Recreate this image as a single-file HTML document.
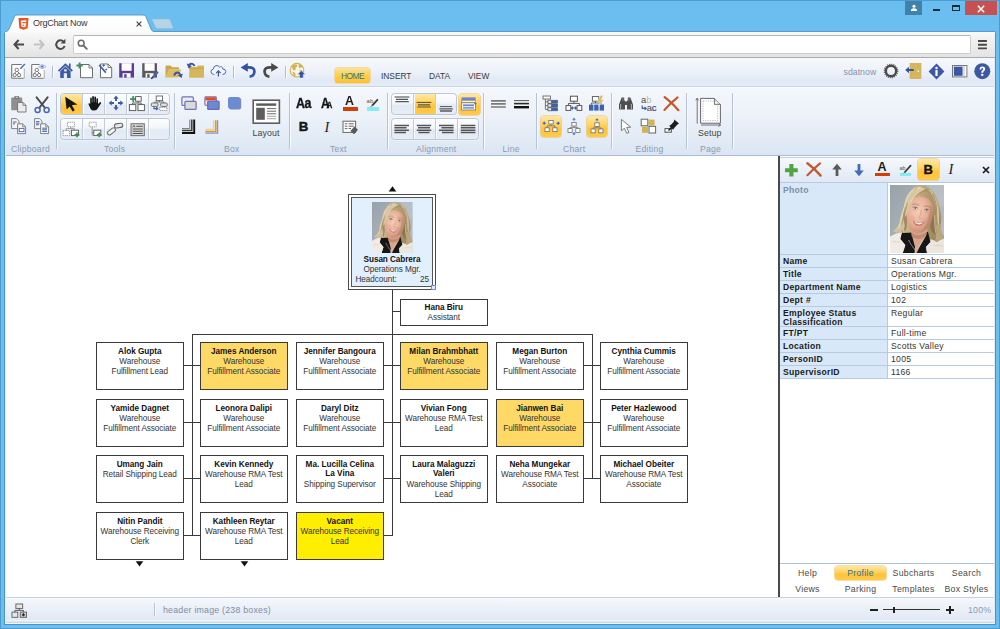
<!DOCTYPE html>
<html><head><meta charset="utf-8"><title>OrgChart Now</title>
<style>
*{box-sizing:border-box;margin:0;padding:0}
html,body{width:1000px;height:629px;overflow:hidden}
body{position:relative;background:#6bbff0;font-family:"Liberation Sans",sans-serif;font-size:10px;color:#222}
.abs{position:absolute}
svg{position:absolute;overflow:visible}
/* window frame */
#frame{position:absolute;left:0;top:0;width:1000px;height:629px;box-shadow:inset 0 0 0 1px #4c9bd1}
#frame2{position:absolute;left:4px;top:33px;width:992px;height:592px;border:1px solid #4a92c8;border-top:none}
#frame3{position:absolute;left:5px;top:58px;width:990px;height:566px;border-left:1px solid #eceef1;border-right:1px solid #e6e9ed;z-index:5;pointer-events:none}
#nav{position:absolute;left:5px;top:32px;width:990px;height:26px;background:linear-gradient(#f9f9f9,#f1f1f1 30%,#eaeaea 70%,#e3e3e3);border-bottom:1px solid #adaba9}
#url{position:absolute;left:73px;top:35px;width:898px;height:19px;background:#fff;border:1px solid #cdcdcd;border-top-color:#b4b4b4;border-radius:2px}
#app{position:absolute;left:5px;top:58px;width:990px;height:566px;background:#fff;overflow:hidden}
#qbar{position:absolute;left:0;top:0;width:990px;height:29px;background:linear-gradient(#f6f8fc,#eef2f9 45%,#e1e9f5 80%,#e6edf7);border-bottom:1px solid #c9d5e6}
#ribbon{position:absolute;left:0;top:29px;width:990px;height:69px;background:linear-gradient(#f4f7fc,#edf2f9 40%,#dbe6f3);border-bottom:1px solid #a9bcd6;border-top:1px solid #fbfcfe}
#status{position:absolute;left:0;top:539px;width:990px;height:27px;background:linear-gradient(#f5f8fc,#e9eff8 50%,#dce6f3);border-top:1px solid #c5d3e6}
.rlabel{position:absolute;top:87px;font-size:9.5px;color:#8b9bb4;letter-spacing:.35px;white-space:nowrap}
.rsep{position:absolute;top:7px;width:1px;height:56px;background:#b9c7db;box-shadow:1px 0 0 #f8fafd}
.tab{position:absolute;top:13px;font-size:9px;color:#333;letter-spacing:.3px;white-space:nowrap}
/* chart */
.box{position:absolute;width:87.5px;height:48px;border:1px solid #3a3a3a;background:#fff;text-align:center;font-size:8.2px;letter-spacing:-.08px;line-height:9.4px;color:#333;padding-top:3.6px;white-space:nowrap}
.box b{display:block;color:#111;font-size:8.2px;letter-spacing:-.02px;margin-bottom:1.4px}
.hl{background:#ffd966}
.vac{background:#ffee00}
.ln{position:absolute;background:#3a3a3a}
.tabt{top:71.2px;font-size:8.4px;letter-spacing:-.02px;color:#3a3a3a;white-space:nowrap;line-height:10px}
.rl{position:absolute;top:144px;font-size:8.6px;line-height:10px;color:#8a9ab3;letter-spacing:.25px;white-space:nowrap}
.sep{position:absolute;top:93px;width:1px;height:56px;background:#b4c3d9;box-shadow:1px 0 0 #f9fbfe}
.bg{position:absolute;height:22px;border:1px solid #bcc6d4;border-radius:3.5px;background:linear-gradient(#fdfeff,#f2f6fb 45%,#e2eaf5 55%,#e6edf7);box-shadow:0 0 0 .5px rgba(255,255,255,.6)}
.bg i{position:absolute;top:0;width:1px;height:20px;background:#c3ccd9;box-shadow:1px 0 0 #fafcff}
.sel{position:absolute;background:linear-gradient(#ffe7a6,#ffd566 40%,#ffc43a 60%,#ffc94a);}
.selb{position:absolute;border-radius:3px;background:linear-gradient(#ffe7a6,#ffd566 40%,#ffc43a 60%,#ffc94a);box-shadow:0 0 0 .6px #f0bd4e}
.big{position:absolute;font-size:8.8px;color:#444;white-space:nowrap;line-height:10px;letter-spacing:.1px}
.ct{position:absolute;text-align:center;letter-spacing:-.08px;font-size:8.2px;line-height:10px;color:#333;white-space:nowrap}
.ct.b{font-weight:bold;color:#111;font-size:8.2px}
/* panel */
#panel{position:absolute;left:778px;top:156px;width:217px;height:441px;background:#fff;border-left:2px solid #4a4a4a}
#ptool{position:absolute;left:780px;top:157px;width:215px;height:26px;border-top:1px solid #c3cfe2;background:linear-gradient(#f5f8fc,#eaf0f8 50%,#dfe8f4);border-bottom:1px solid #b9cadf}
.prow{position:absolute;left:780px;width:215px;border-bottom:1px solid #b5cbe3;background:#fff}
.prow .k{position:absolute;left:0;top:0;bottom:0;width:108px;background:#d8e8f8;border-right:1px solid #b5cbe3;font-weight:bold;font-size:8.6px;line-height:9.5px;color:#1a1a1a;padding:1.9px 0 0 3px;letter-spacing:.28px;white-space:nowrap}
.prow .v{position:absolute;left:111px;top:1.9px;font-size:8.6px;line-height:9.5px;color:#333;letter-spacing:.3px;white-space:nowrap}
.pt{margin-top:.6px;position:absolute;font-size:8.7px;line-height:10px;color:#4a4a4a;letter-spacing:.3px;white-space:nowrap;text-align:center}

</style></head>
<body>
<svg style="left:0;top:0" width="0" height="0">
 <defs>
  <linearGradient id="pbg" x1="0" y1="0" x2="1" y2=".8"><stop offset="0" stop-color="#97a1a9"/><stop offset=".5" stop-color="#a9b1b8"/><stop offset="1" stop-color="#bac1c6"/></linearGradient>
  <linearGradient id="phair" x1="0" y1="0" x2="1" y2=".25"><stop offset="0" stop-color="#c2ac82"/><stop offset=".3" stop-color="#d8c7a0"/><stop offset=".6" stop-color="#b9a074"/><stop offset="1" stop-color="#9f875e"/></linearGradient>
  <radialGradient id="pskin" cx=".4" cy=".4" r=".65"><stop offset="0" stop-color="#f5cdb6"/><stop offset=".55" stop-color="#e8b39a"/><stop offset="1" stop-color="#c48a72"/></radialGradient>
  <filter id="pb1" x="-30%" y="-30%" width="160%" height="160%"><feGaussianBlur stdDeviation="1.4"/></filter>
  <filter id="pb2" x="-30%" y="-30%" width="160%" height="160%"><feGaussianBlur stdDeviation=".7"/></filter>
  <filter id="pb3" x="-30%" y="-30%" width="160%" height="160%"><feGaussianBlur stdDeviation=".35"/></filter>
  <filter id="pb0" x="0" y="0" width="100%" height="100%"><feGaussianBlur stdDeviation=".28"/></filter>
  <clipPath id="pclip"><rect width="54" height="68"/></clipPath>
  <symbol id="ph" viewBox="0 0 54 68" preserveAspectRatio="none">
   <g clip-path="url(#pclip)"><rect width="54" height="68" fill="#a5aeb5"/><g filter="url(#pb0)">
    <rect x="-2" y="-2" width="58" height="72" fill="url(#pbg)"/>
    <ellipse cx="46" cy="10" rx="12" ry="14" fill="#c3c9cd" opacity=".55" filter="url(#pb1)"/>
    <!-- hair mass -->
    <path d="M31 .6 C25 .4 21.6 3.6 19.4 8 C16.4 11.6 15.4 15 14.6 19.6 C13 24 11.4 28 10.4 32.6 C9.8 36.4 9.4 39.4 7.6 42.2 C6.4 44 4.6 45.4 2.6 46.2 C5 47.6 8.4 48 10.8 47.2 C11.2 48.6 11.8 49.4 13 50 L40 54 C42 54.6 43 56 46.6 57.6 C50 56.6 53 54 54.4 51.6 C52 49.6 50.4 46 50 42 C51.4 38 51.6 34 51 30 C50.4 25.6 49.6 21.6 48.2 17.4 C46.6 12.6 45.4 9 42.4 6 C39.6 3 35.6 .8 31 .6Z" fill="url(#phair)" filter="url(#pb2)"/>
    <!-- hair shadows near face/neck -->
    <path d="M14.6 27 C13.4 33 12.8 40 14.8 47 C17 44 17.4 38 17 32 C16.8 29 16.2 26 14.6 27Z" fill="#8e7752" opacity=".7" filter="url(#pb2)"/>
    <path d="M42.6 24 C44.4 31 43.6 40 46 50 C42.8 48.6 40.4 45 40 41 C42 36 42.6 30 42.6 24Z" fill="#866d48" opacity=".75" filter="url(#pb2)"/>
    <path d="M48 20 C50 28 50.6 36 49.6 43" stroke="#a48c62" stroke-width="1.3" fill="none" opacity=".7" filter="url(#pb2)"/>
    <!-- black top + skin V -->
    <path d="M11.7 48 L38 47 L40.4 57 L35.8 62 L37 68.5 H12.6 L15.2 60.4 L10 54 Z" fill="#121317"/>
    <path d="M20.4 44 L37.6 44 L36 51 L29.6 62 L26.4 68.5 L24.6 68.5 L25 62 L22.6 53 Z" fill="#d8a58b" filter="url(#pb3)"/>
    <path d="M20.6 46.6 Q27.6 53.6 37 46.6 L36.4 50.4 Q28 57 21.4 51.6Z" fill="#b07c62" opacity=".6" filter="url(#pb2)"/>
    <!-- necklace -->
    <path d="M18.6 55 Q21.6 61 25 64.6 M32.4 55.2 Q29.6 61 26 64.6 M25.4 64 V68" stroke="#d2d6da" stroke-width="1" fill="none" stroke-dasharray=".9 .45"/>
    <circle cx="25.4" cy="64.6" r=".9" fill="#b0b6bc"/>
    <!-- jacket -->
    <path d="M-1 52.6 C3 49.6 8 47.6 11.8 47.8 L10.4 54 L15.4 60 L12.6 68.5 H-1Z" fill="#f0ebe4" filter="url(#pb3)"/>
    <path d="M55 54.6 C52 53.4 50 54.6 47 57 C44.6 56 42.6 54.6 40.6 54.6 L40.6 57 L36 62 L37.2 68.5 H55Z" fill="#ece6dd" filter="url(#pb3)"/>
    <path d="M2 57 Q6 55.6 9.6 57.6 M44 61 Q48.6 59.4 53 61.6" stroke="#d3cabd" stroke-width=".7" fill="none" filter="url(#pb3)"/>
    <!-- face -->
    <g transform="rotate(9 29.6 30)">
     <path d="M29.6 11.4 C37.6 11.4 42.6 17.6 42.6 27 C42.6 34 40.8 39.6 37.4 43.6 C34.8 46.8 32 48.6 29.4 48.6 C26.6 48.6 23.8 46.8 21.4 43.4 C18.4 39.4 16.8 34 16.8 27 C16.8 17.6 21.8 11.4 29.6 11.4Z" fill="url(#pskin)" filter="url(#pb3)"/>
     <path d="M39.6 18 Q44 28 40.6 39 Q37.6 45.6 32.6 48.2 Q37.6 42 38.4 33.6 Q39 25 39.6 18Z" fill="#b27a62" opacity=".5" filter="url(#pb2)"/>
     <ellipse cx="22.6" cy="34.6" rx="3.8" ry="3.2" fill="#e69a88" opacity=".3" filter="url(#pb2)"/>
     <ellipse cx="36.4" cy="35.4" rx="3.2" ry="3" fill="#d8907c" opacity=".3" filter="url(#pb2)"/>
     <!-- brows / eyes -->
     <path d="M20.6 20.8 Q24 18.8 27.6 20.6" stroke="#a38262" stroke-width=".9" fill="none" filter="url(#pb3)"/>
     <path d="M32.6 20.6 Q36.2 18.8 39.6 21" stroke="#a38262" stroke-width=".9" fill="none" filter="url(#pb3)"/>
     <ellipse cx="24.2" cy="23.8" rx="2.3" ry=".95" fill="#e9d6cc"/><circle cx="24.3" cy="23.8" r=".95" fill="#4f7474"/>
     <ellipse cx="36" cy="24" rx="2.2" ry=".95" fill="#e4d0c6"/><circle cx="35.9" cy="24" r=".95" fill="#4f7474"/>
     <path d="M21.4 23.4 Q24.2 21.9 27 23.6 M33.4 23.8 Q36 22.1 38.6 23.6" stroke="#6a5142" stroke-width=".6" fill="none"/>
     <path d="M22 25.4 Q24.4 26.4 26.6 25.4 M34 25.8 Q36 26.6 38.2 25.6" stroke="#c08d78" stroke-width=".5" fill="none" filter="url(#pb3)"/>
     <!-- nose -->
     <path d="M30.6 24.6 Q31.4 30 29.2 32.8 Q30.4 34 32.6 33" stroke="#c68c74" stroke-width=".9" fill="none" opacity=".6" filter="url(#pb2)"/>
     <!-- mouth -->
     <path d="M23.6 36.8 Q29.6 39 35.4 36.2 Q33.8 41 29.2 41 Q25.4 40.8 23.6 36.8Z" fill="#c4756c"/>
     <path d="M24.8 37.3 Q29.6 38.9 34.2 36.9 Q32.8 39.5 29.3 39.5 Q26.4 39.3 24.8 37.3Z" fill="#f8efe9"/>
     <path d="M26.4 44.8 Q29.4 46 32.6 44.6" stroke="#cf987f" stroke-width=".8" fill="none" filter="url(#pb3)"/>
    </g>
    <!-- front hair -->
    <path d="M19 12 C16.6 18 16 24 13 30 M44 10 C47 16 47.6 24 47 32 M10.6 36 C10 40 8 43 5.6 45.4 M50.6 44 C50.6 48 51.6 50 53 52" stroke="#a08a62" stroke-width=".9" fill="none" opacity=".7" filter="url(#pb2)"/>
    <path d="M36 3.4 C29 5.6 23.6 10.6 21 17.6 C19.8 21.6 18.4 26.6 15.4 32 C13.4 26 13.8 18 16.4 12 C19.6 5 27 1.4 36 3.4Z" fill="#d6c7a2" filter="url(#pb3)"/>
    <path d="M35.6 3.2 C41 6.6 44.6 12 45.6 19 C46.4 26 45.6 33 46.6 40 C49.6 34 50 25 48.2 17.4 C46 9 41.6 3.6 35.6 3.2Z" fill="#c3ae84" filter="url(#pb3)"/>
    <path d="M34 4.6 C28 7 23 11.6 20.6 17.6 M32 2.6 C25 4 19 9 16.8 17 M38 4.8 C42 8.6 45 14 46 20 M47.4 22 C48.4 30 48.2 37 49 43 M12.6 30 C11.8 35 11 40 8 44" stroke="#f1e8cf" stroke-width=".75" fill="none" opacity=".85" filter="url(#pb3)"/>
    <g fill="none" filter="url(#pb3)">
     <path d="M30 2 C23 4 18 9 16 16 C14.6 22 13 27 11.4 33 C10.6 38 9 42 5 45.6" stroke="#e9dcbc" stroke-width="1.1" opacity=".8"/>
     <path d="M27 3.4 C21.6 6.6 18.6 11.6 17.4 17.6 C16.4 23 15 28 13.4 33.6 C12.6 38.6 11.6 42.6 8.6 46.6" stroke="#a38b60" stroke-width=".9" opacity=".75"/>
     <path d="M24 5 C20 9 18.6 13 17.8 18" stroke="#f0e6cc" stroke-width=".8" opacity=".8"/>
     <path d="M15.4 22 C14.4 27 13.4 31 12.2 36 C11.6 40 10.8 44 12.6 48" stroke="#8f784f" stroke-width="1" opacity=".6"/>
     <path d="M40 5 C43.6 9 45.6 14 46.6 20 C47.4 27 47.6 33 48 39 C48.4 44 49.6 48 52.6 51" stroke="#e4d6b4" stroke-width="1" opacity=".75"/>
     <path d="M42.6 8.6 C45 13 46 18 46.6 24 C47 30 46.6 36 47.4 42 C47.8 47 48.6 51 47 56" stroke="#927a52" stroke-width="1" opacity=".7"/>
     <path d="M49.4 24 C50.4 30 50.6 36 50 42 C50 46 51 49 53.4 51" stroke="#b59d72" stroke-width=".9" opacity=".8"/>
     <path d="M44.6 30 C45 36 44.6 42 46 48 C46.6 51 46.6 54 45.6 56.6" stroke="#decfac" stroke-width=".9" opacity=".7"/>
    </g>
    <path d="M37 3.4 C32 5 27 8.4 23.6 13 C27.6 9.6 32 7.4 36.6 6.6 C40 8.6 42.6 12 44 16 C43.4 10.6 41 5.8 37 3.4Z" fill="#9f8862" opacity=".55" filter="url(#pb2)"/>
    <path d="M13.6 34 C12.8 39 10 43.6 4.6 46.4 C9.6 47.8 13.4 45.6 14.8 41.6Z" fill="#cfc09a" filter="url(#pb3)"/>
    <path d="M45.6 40 C46 46 48.6 50 45.4 56.6 C49.6 56 52.8 53.6 54 51.4 C51.6 48.6 50.4 44 50.4 39Z" fill="#bba67c" filter="url(#pb3)"/>
   </g></g>
  </symbol>
 </defs>
</svg>
<div id="frame"></div><div id="frame2"></div><div id="frame3"></div>
<svg style="left:0;top:0" width="1000" height="60" viewBox="0 0 1000 60">
 <defs><linearGradient id="tabg" x1="0" y1="0" x2="0" y2="1"><stop offset="0" stop-color="#ffffff"/><stop offset="1" stop-color="#fbfbfb"/></linearGradient></defs>
 <path d="M5 33 L5 32.5 Q8 31 9 29 L14.5 16.5 Q15.2 15 17 15 L143 15 Q145 15 145.8 16.5 L151.5 30 Q152.3 31.5 154 31.5 L995 31.5 L995 33 Z" fill="url(#tabg)" stroke="#4f94c4" stroke-width="0.9"/>
 <rect x="5" y="32" width="990" height="2" fill="#fcfcfc"/>
 <path d="M152 19 L168 19 Q169.5 19 170 20 L173 27.2 Q173.4 28.4 172 28.4 L157.5 28.4 Q156 28.4 155.5 27.2 L152.2 20 Q151.8 19 152 19Z" fill="#b9d3e6" stroke="#8fbadb" stroke-width="0.5"/>
</svg>
<div id="nav"></div>
<div id="url"></div>
<!-- tab content -->
<svg style="left:18px;top:17.5px" width="11" height="12" viewBox="0 0 22 24">
 <path d="M1 0 H21 L19.2 20.5 L11 23.5 L2.8 20.5 Z" fill="#e44d26"/>
 <path d="M11 1.8 V21.6 L17.6 19.2 L19.1 1.8 Z" fill="#f16529"/>
 <path d="M5.5 5 H16.5 L16.2 8 H8.7 L8.9 10.6 H16 L15.4 17.2 L11 18.6 L6.6 17.2 L6.3 14 H9.2 L9.3 15.3 L11 15.8 L12.7 15.3 L12.9 13.4 H6.1 Z" fill="#fff"/>
</svg>
<div class="abs" style="left:33px;top:18.2px;font-size:9px;color:#3a3a3a;letter-spacing:-.28px;white-space:nowrap">OrgChart Now</div>
<svg style="left:136px;top:21px" width="6" height="6" viewBox="0 0 6 6"><path d="M.6 .6 L5.4 5.4 M5.4 .6 L.6 5.4" stroke="#444" stroke-width="1.15"/></svg>
<!-- nav icons -->
<svg style="left:13px;top:39px" width="12" height="11" viewBox="0 0 12 11"><path d="M5.6 1 L1.5 5.5 L5.6 10 M1.7 5.5 H11" stroke="#4a4a4a" stroke-width="2" fill="none" stroke-linejoin="miter"/></svg>
<svg style="left:33px;top:39px" width="12" height="11" viewBox="0 0 12 11"><path d="M6.4 1 L10.5 5.5 L6.4 10 M10.3 5.5 H1" stroke="#c3c3c3" stroke-width="2" fill="none"/></svg>
<svg style="left:54px;top:38px" width="13" height="13" viewBox="0 0 13 13"><path d="M9.6 3.6 A4.3 4.3 0 1 0 10.6 8" stroke="#4a4a4a" stroke-width="2" fill="none"/><path d="M6.6 5.6 L11.4 5.6 L11.4 .8 Z" fill="#4a4a4a"/></svg>
<svg style="left:77px;top:39px" width="11" height="11" viewBox="0 0 11 11"><circle cx="4.2" cy="4.2" r="2.9" stroke="#6a6a6a" stroke-width="1.5" fill="none"/><path d="M6.3 6.3 L9.8 9.8" stroke="#6a6a6a" stroke-width="1.9" stroke-linecap="round"/></svg>
<svg style="left:978px;top:40px" width="10" height="10" viewBox="0 0 10 10"><path d="M0 1 H8.9 M0 4.7 H8.9 M0 8.4 H8.9" stroke="#484848" stroke-width="1.9"/></svg>
<!-- window controls -->
<div class="abs" style="left:905px;top:1px;width:17px;height:14px;background:#3f83ad"></div>
<svg style="left:909.5px;top:3.5px" width="8" height="8" viewBox="0 0 9 9"><circle cx="4.5" cy="2.6" r="1.7" fill="#fff"/><path d="M1 8 Q1 4.8 4.5 4.8 Q8 4.8 8 8 Z" fill="#fff"/></svg>
<div class="abs" style="left:933px;top:9px;width:7px;height:2px;background:#1c2a36"></div>
<div class="abs" style="left:952px;top:5px;width:8px;height:6px;border:1px solid #1c2a36;border-top-width:2px"></div>
<div class="abs" style="left:965px;top:1px;width:32px;height:14px;background:#c75050"></div>
<svg style="left:977px;top:4.5px" width="8" height="8" viewBox="0 0 8 8"><path d="M.8 .8 L7.2 7.2 M7.2 .8 L.8 7.2" stroke="#fff" stroke-width="1.5"/></svg>
<div id="app"><div id="qbar"></div><div id="ribbon"></div><div id="status"></div></div>
<!-- QUICK BAR ICONS (page coords) -->
<!-- 1 edit chart -->
<svg style="left:10px;top:62px" width="17" height="17" viewBox="0 0 17 17">
 <rect x="1.7" y="2.5" width="12.6" height="13.8" rx=".8" fill="#fdfdfd"/>
 <path d="M14.3 6.4 V15.6 Q14.3 16.3 13.6 16.3" fill="none" stroke="#b4b4b4" stroke-width="1.1"/>
 <path d="M11.9 2.5 H2.4 Q1.7 2.5 1.7 3.2 V15.6 Q1.7 16.3 2.4 16.3 H13.6" fill="none" stroke="#787878" stroke-width="1.1"/>
 <g fill="none" stroke="#6a6a6a" stroke-width=".9"><rect x="5.2" y="6.3" width="3.2" height="3.2" rx="1.3"/><path d="M6 9.5 L4.2 11.6 M7.6 9.5 L9.6 11.6"/><circle cx="4.7" cy="13.1" r="1.65"/><circle cx="9.1" cy="13.1" r="1.65"/></g>
 <path d="M14.9 2.1 L10.3 6.8" stroke="#4a6cbc" stroke-width="1.5"/>
</svg>
<!-- 2 view chart -->
<svg style="left:30px;top:62px" width="17" height="17" viewBox="0 0 17 17">
 <rect x="1.7" y="2.5" width="12.6" height="13.8" rx=".8" fill="#fdfdfd"/>
 <path d="M14.3 8 V15.6 Q14.3 16.3 13.6 16.3" fill="none" stroke="#b4b4b4" stroke-width="1.1"/>
 <path d="M9.6 2.5 H2.4 Q1.7 2.5 1.7 3.2 V15.6 Q1.7 16.3 2.4 16.3 H13.6" fill="none" stroke="#787878" stroke-width="1.1"/>
 <g fill="none" stroke="#6a6a6a" stroke-width=".9"><rect x="5.2" y="6.3" width="3.2" height="3.2" rx="1.3"/><path d="M6 9.5 L4.2 11.6 M7.6 9.5 L9.6 11.6"/><circle cx="4.7" cy="13.1" r="1.65"/><circle cx="9.1" cy="13.1" r="1.65"/></g>
 <path d="M8.3 4.7 Q12.2 1 16.1 4.7 Q12.2 8.2 8.3 4.7Z" fill="#eef3fc" stroke="#9ab4e4" stroke-width=".8"/><circle cx="12.2" cy="4.6" r="1.7" fill="#dbe6f8" stroke="#7d9ad6" stroke-width=".6"/><circle cx="12.2" cy="4.6" r=".95" fill="#3f62b4"/>
</svg>
<div class="abs" style="left:52px;top:66px;width:1px;height:12px;background:#aebcd4;box-shadow:1px 0 0 #fafcfe"></div>
<!-- 3 home -->
<svg style="left:57px;top:62px" width="17" height="17" viewBox="0 0 17 17">
 <path d="M8.4 1.2 L.9 8.6 L2.1 9.8 L8.4 3.7 L14.7 9.8 L15.9 8.6 L13.6 6.3 V1.6 H11.9 V4.6 Z" fill="#3c59a6"/>
 <path d="M3.2 9.3 L8.4 4.6 L13.6 9.3 V16 H10 V11.2 H6.8 V16 H3.2 Z" fill="#3c59a6"/>
 <rect x="7.1" y="7.4" width="2.6" height="2" fill="#e9eff9"/>
</svg>
<!-- 4 new doc -->
<svg style="left:76px;top:62px" width="18" height="17" viewBox="0 0 18 17">
 <path d="M4.5 2.5 H13 L16.5 6 V15.7 H4.5 Z" fill="#fff" stroke="#6d6d6d" stroke-width="1"/><path d="M13 2.5 V6 H16.5" fill="none" stroke="#6d6d6d" stroke-width=".9"/>
 <path d="M3.6 .4 V6.6 M.5 3.5 H6.7" stroke="#3f8f5a" stroke-width="1.9"/>
</svg>
<!-- 5 doc wand -->
<svg style="left:97px;top:62px" width="18" height="17" viewBox="0 0 18 17">
 <path d="M3.5 2 H11 L14.7 5.6 V15.7 H3.5 Z" fill="#fff" stroke="#6d6d6d" stroke-width="1"/><path d="M11 2 V5.6 H14.7" fill="none" stroke="#6d6d6d" stroke-width=".9"/>
 <path d="M2.2 3 L8.8 10.6" stroke="#3d5fb0" stroke-width="1.7"/><path d="M6.6 2.2 V4.8 M5.3 3.5 H7.9 M9.2 6.6 V8.4 M8.3 7.5 H10.1" stroke="#3d5fb0" stroke-width=".9"/>
</svg>
<!-- 6 save purple -->
<svg style="left:118px;top:62px" width="18" height="17" viewBox="0 0 18 17">
 <path d="M1.2 1.2 H16 V15.6 H1.2 Z" fill="#5a3b97"/><rect x="3.6" y="1.2" width="10" height="7.6" fill="#fff"/><rect x="4.6" y="11.2" width="8" height="4.4" fill="#fff"/><rect x="6.2" y="12.2" width="2.4" height="3.4" fill="#5a3b97"/>
</svg>
<!-- 7 save as gray -->
<svg style="left:141px;top:62px" width="19" height="17" viewBox="0 0 19 17">
 <path d="M1.2 1.2 H16 V15.6 H1.2 Z" fill="#5a5a5a"/><rect x="3.6" y="1.2" width="10" height="7.6" fill="#fff"/><rect x="4.6" y="11.2" width="8" height="4.4" fill="#fff"/><rect x="6.2" y="12.2" width="2.4" height="3.4" fill="#5a5a5a"/>
 <path d="M11.6 15.4 L16.4 10.4" stroke="#4766b6" stroke-width="2.1" stroke-linecap="round"/><path d="M10.2 16.8 L11.8 15.2" stroke="#333" stroke-width="1.2"/>
</svg>
<!-- 8 open folder -->
<svg style="left:164px;top:63px" width="20" height="16" viewBox="0 0 20 16">
 <path d="M1.5 14.2 V3.6 Q1.5 2.6 2.5 2.6 H6.6 L8 4.2 H14.2 Q15 4.2 15 5 V6.4 H5.2 L2.2 14.2Z" fill="#c9a74e"/>
 <path d="M1.5 14.6 L4.6 6.6 H17.2 L14.4 14.6 Z" fill="#dcbd62"/>
 <path d="M9.3 12.6 Q10 8.6 13.6 8.6 Q16.4 8.6 17 11.2 L18.8 10.6 L17.6 14.9 L13.6 12.6 L15.3 11.9 Q14.9 10.4 13.5 10.4 Q11.6 10.4 11 12.9 Z" fill="#3a57a6"/>
</svg>
<!-- 9 folder back arrow -->
<svg style="left:186px;top:62px" width="20" height="17" viewBox="0 0 20 17">
 <path d="M3.2 15.8 V5 H10.6 L12 3.4 H17.2 Q18 3.4 18 4.2 V15.8 Z" fill="#d5b65c"/><path d="M3.2 6.4 H18" stroke="#c4a248" stroke-width=".8"/>
 <path d="M2.6 6.4 L.7 1.4 L2.6 2.1 Q4.4 .2 6.8 .9 Q9 1.7 9.4 4 L7.4 4.2 Q7 3 6 2.7 Q4.9 2.5 4.2 3.2 L5.9 4.2 Z" fill="#3a57a6"/>
</svg>
<!-- 10 cloud -->
<svg style="left:210px;top:63px" width="18" height="15" viewBox="0 0 18 15">
 <path d="M4.4 11.4 H3.6 Q1 11 1 8.6 Q1 6.4 3.4 6 Q3.4 3.2 6 2.6 Q8.4 2.2 9.6 4.2 Q10.4 3.4 11.6 3.8 Q13 4.4 12.8 6 Q15.6 6 15.8 8.6 Q15.8 11.2 13 11.4 H12.4" fill="#f1f5fc" stroke="#4c69b2" stroke-width="1"/>
 <path d="M8.4 13.6 V8.2 M6.2 10.2 L8.4 7.8 L10.6 10.2" stroke="#3a57a6" stroke-width="1.2" fill="none"/>
</svg>
<div class="abs" style="left:233px;top:66px;width:1px;height:12px;background:#aebcd4;box-shadow:1px 0 0 #fafcfe"></div>
<!-- 11 undo -->
<svg style="left:240px;top:62px" width="17" height="17" viewBox="0 0 17 17">
 <path d="M.6 5.4 L7.8 1 V9.8 Z" fill="#3553a6"/><path d="M7 5.4 Q14.8 4.6 14.4 10 Q14 14.2 9.6 14.6" fill="none" stroke="#3553a6" stroke-width="2.7"/>
</svg>
<!-- 12 redo -->
<svg style="left:262px;top:62px" width="17" height="17" viewBox="0 0 17 17">
 <path d="M16.4 5.4 L9.2 1 V9.8 Z" fill="#4a4a4a"/><path d="M10 5.4 Q2.2 4.6 2.6 10 Q3 14.2 7.4 14.6" fill="none" stroke="#4a4a4a" stroke-width="2.7"/>
</svg>
<div class="abs" style="left:285px;top:66px;width:1px;height:12px;background:#aebcd4;box-shadow:1px 0 0 #fafcfe"></div>
<!-- 13 globe -->
<svg style="left:289px;top:62px" width="18" height="17" viewBox="0 0 18 17">
 <circle cx="8" cy="8.2" r="6.8" fill="#fbf6e4" stroke="#d4b052" stroke-width="1.1"/>
 <path d="M3 4.4 Q5 2 7.6 2.6 L8.4 4.4 L6.4 5.6 L6.8 7.4 L5 8.6 L3.4 7 Z M9.6 2 Q12.8 2.4 14 5.4 L12 5.2 L10.6 6.6 L9.8 5 Z M3.4 9.8 L5.6 10.4 L6.8 12.8 L6 14.2 Q3.8 12.6 3.4 9.8Z M10.2 8.2 L12.8 8 L13.2 9.2 L11 9.6Z" fill="#d4b052"/>
 <path d="M12.4 8.6 L16.6 12.6 H14.3 V16 H10.5 V12.6 H8.2 Z" fill="#3553a6" stroke="#eef2fa" stroke-width=".5"/>
</svg>
<!-- tabs -->
<div class="abs" style="left:335px;top:68px;width:35px;height:15px;border-radius:2.5px;background:linear-gradient(#ffe39a,#ffcf55 45%,#ffbf2e);box-shadow:0 0 0 .5px #f3c35a"></div>
<div class="abs tabt" style="left:341px;color:#2f7391;letter-spacing:-.5px">HOME</div>
<div class="abs tabt" style="left:381px">INSERT</div>
<div class="abs tabt" style="left:429px">DATA</div>
<div class="abs tabt" style="left:468px">VIEW</div>
<!-- right side -->
<div class="abs" style="left:843.5px;top:66.5px;font-size:8.7px;color:#8292ab;letter-spacing:.05px;white-space:nowrap">sdatnow</div>
<svg style="left:883px;top:63px" width="16" height="16" viewBox="0 0 16 16">
 <circle cx="8" cy="8" r="5.2" fill="none" stroke="#4a4a4a" stroke-width="2.5"/>
 <circle cx="8" cy="8" r="6.8" fill="none" stroke="#555" stroke-width="1.1" stroke-dasharray="1.1 1.036"/>
</svg>
<svg style="left:904px;top:62px" width="19" height="18" viewBox="0 0 19 18">
 <rect x="5.6" y="1" width="11.8" height="16" fill="#d6b65a"/><rect x="13.6" y="8.6" width="1.4" height="1.4" fill="#fff"/>
 <path d="M1.2 8 L5 4.8 V7.1 H9.8 V8.9 H5 V11.2 Z" fill="#3553a6"/>
</svg>
<svg style="left:928px;top:62.5px" width="17" height="17" viewBox="0 0 17 17">
 <path d="M8.5 .4 L16.4 8.5 L8.5 16.6 L.6 8.5 Z" fill="#3c58a2"/>
 <circle cx="8.5" cy="4.9" r="1.25" fill="#fff"/><rect x="7.4" y="7" width="2.2" height="6" rx=".5" fill="#fff"/>
</svg>
<svg style="left:952px;top:65px" width="16" height="13" viewBox="0 0 16 13">
 <rect x=".5" y=".5" width="14.4" height="11.4" fill="#fff" stroke="#777" stroke-width="1"/><rect x="1.8" y="1.6" width="8.8" height="9.2" fill="#3c58a2"/><path d="M12 1 V11.5" stroke="#aaa" stroke-width=".8"/>
</svg>
<svg style="left:974px;top:63px" width="17" height="17" viewBox="0 0 17 17">
 <circle cx="8.3" cy="8.2" r="8" fill="#3c58a2"/>
 <path d="M5.6 6.4 Q5.6 3.4 8.4 3.4 Q11.2 3.4 11.2 5.9 Q11.2 7.4 9.8 8.2 Q9.2 8.6 9.2 9.8 H7.3 Q7.2 8 8.4 7.2 Q9.3 6.6 9.2 5.9 Q9.1 5 8.3 5 Q7.4 5 7.4 6.4 Z" fill="#fff"/><rect x="7.2" y="10.8" width="2.1" height="2.1" fill="#fff"/>
</svg>
<!-- RIBBON labels & separators -->
<div class="rl" style="left:11px">Clipboard</div>
<div class="rl" style="left:104px">Tools</div>
<div class="rl" style="left:224px">Box</div>
<div class="rl" style="left:330px">Text</div>
<div class="rl" style="left:416px">Alignment</div>
<div class="rl" style="left:502.5px">Line</div>
<div class="rl" style="left:563px">Chart</div>
<div class="rl" style="left:635.5px">Editing</div>
<div class="rl" style="left:700px">Page</div>
<div class="sep" style="left:56px"></div><div class="sep" style="left:174px"></div><div class="sep" style="left:289px"></div>
<div class="sep" style="left:387px"></div><div class="sep" style="left:483px"></div><div class="sep" style="left:536px"></div>
<div class="sep" style="left:611px"></div><div class="sep" style="left:686px"></div><div class="sep" style="left:732px"></div>
<!-- button groups -->
<div class="bg" style="left:59.6px;top:93px;width:110.4px"><div class="sel" style="left:0;top:0;width:22px;height:20px;border-radius:2.5px 0 0 2.5px"></div><i style="left:21px"></i><i style="left:43px"></i><i style="left:65px"></i><i style="left:87px"></i></div>
<div class="bg" style="left:60px;top:118px;width:110px"><i style="left:21px"></i><i style="left:43px"></i><i style="left:65px"></i><i style="left:87px"></i></div>
<div class="bg" style="left:391px;top:93px;width:66px"><div class="sel" style="left:21px;top:0;width:22px;height:20px"></div><i style="left:21px"></i><i style="left:43px"></i></div>
<div class="selb" style="left:458.5px;top:93.5px;width:21px;height:21px"></div>
<div class="bg" style="left:391px;top:118px;width:88px"><i style="left:21px"></i><i style="left:43px"></i><i style="left:65px"></i></div>
<div class="selb" style="left:540.7px;top:116.4px;width:20.5px;height:20.2px"></div>
<div class="selb" style="left:586.5px;top:116.4px;width:20.5px;height:20.2px"></div>
<!-- CLIPBOARD icons -->
<svg style="left:10px;top:95px" width="18" height="18" viewBox="0 0 18 18">
 <rect x="1.2" y="2.6" width="11" height="12.6" rx=".8" fill="#8f8f8f"/><rect x="4.2" y="1" width="5" height="3" rx="1" fill="#777"/><rect x="5.6" y="1.6" width="2.2" height="1.2" fill="#ddd"/>
 <path d="M7.6 7.4 H13 L16 10.4 V17 H7.6 Z" fill="#ececec" stroke="#6f6f6f" stroke-width=".9"/><path d="M13 7.4 V10.4 H16" fill="none" stroke="#6f6f6f" stroke-width=".8"/>
</svg>
<svg style="left:32.6px;top:95.6px" width="18" height="18" viewBox="0 0 18 18">
 <path d="M3.6 1.4 L12 12 M14.6 1.4 L6.2 12" stroke="#4c4c4c" stroke-width="2" stroke-linecap="round"/>
 <circle cx="4.6" cy="14" r="2.5" fill="none" stroke="#4a66b3" stroke-width="1.5"/><circle cx="13.6" cy="14" r="2.5" fill="none" stroke="#4a66b3" stroke-width="1.5"/>
</svg>
<svg style="left:10px;top:117px" width="18" height="18" viewBox="0 0 18 18">
 <path d="M1.6 1.6 H6.4 L9 4.2 V11.6 H1.6 Z" fill="#f4f4f4" stroke="#777" stroke-width=".9"/><path d="M3 5 H6.6 M3 6.8 H5" stroke="#4a66b3" stroke-width="1"/>
 <path d="M7.6 6.8 H12.6 L15.6 9.8 V16.6 H7.6 Z" fill="#f6f6f6" stroke="#777" stroke-width=".9"/><path d="M12.6 6.8 V9.8 H15.6" fill="none" stroke="#777" stroke-width=".8"/>
 <rect x="9.2" y="11.4" width="4.8" height="3.2" fill="#fff" stroke="#4a66b3" stroke-width=".9"/>
</svg>
<svg style="left:33px;top:117px" width="18" height="18" viewBox="0 0 18 18">
 <path d="M1.6 1.6 H6.4 L9 4.2 V11.6 H1.6 Z" fill="#f4f4f4" stroke="#777" stroke-width=".9"/><path d="M3 4.6 H6.4 M3 6.2 H6.4 M3 7.8 H6" stroke="#4a66b3" stroke-width="1"/>
 <path d="M7.6 6.8 H12.6 L15.6 9.8 V16.6 H7.6 Z" fill="#f6f6f6" stroke="#777" stroke-width=".9"/><path d="M12.6 6.8 V9.8 H15.6" fill="none" stroke="#777" stroke-width=".8"/>
 <path d="M9.2 11.2 H14 M9.2 12.8 H14 M9.2 14.4 H14" stroke="#4a66b3" stroke-width="1"/>
</svg>
<!-- TOOLS row1 -->
<svg style="left:64px;top:95.6px" width="15" height="17" viewBox="0 0 15 17"><path d="M1.2 .8 L2.6 13.6 L5.6 10.4 L8.6 15.6 L10.8 14.2 L7.8 9.2 L13.4 8.4 Z" fill="#151515"/></svg>
<svg style="left:86px;top:95px" width="16" height="17" viewBox="0 0 16 17">
 <path d="M4.2 9 V3.6 Q4.2 2.6 5 2.6 Q5.8 2.6 5.8 3.6 V7.4 H6.2 V2 Q6.2 1 7 1 Q7.9 1 7.9 2 V7.2 H8.3 V2.4 Q8.3 1.5 9.1 1.5 Q10 1.5 10 2.4 V7.6 H10.4 V4 Q10.4 3.2 11.2 3.2 Q12 3.2 12 4 V9 L13.6 7.4 Q14.4 6.8 15 7.4 Q15.4 8 14.8 8.8 L12 13 Q10.8 15.6 8 15.6 Q5.4 15.6 4.4 13.4 L2.6 9.6 Q2.2 8.6 3 8.2 Q3.8 8 4.2 9Z" fill="#161616"/>
</svg>
<svg style="left:108px;top:95px" width="16" height="16" viewBox="0 0 16 16">
 <g fill="#3d5cac"><path d="M8 .6 L10.6 3.8 H9 V6 H7 V3.8 H5.4 Z"/><path d="M8 15.4 L10.6 12.2 H9 V10 H7 V12.2 H5.4 Z"/><path d="M.6 8 L3.8 5.4 V7 H6 V9 H3.8 V10.6 Z"/><path d="M15.4 8 L12.2 5.4 V7 H10 V9 H12.2 V10.6 Z"/></g>
</svg>
<svg style="left:128px;top:95px" width="18" height="17" viewBox="0 0 18 17">
 <path d="M5.2 1 V7 M2.2 4 H8.2" stroke="#4a9566" stroke-width="1.9"/>
 <g fill="#fff" stroke="#555" stroke-width=".9"><rect x="7.6" y="1.6" width="5.6" height="4.6"/><rect x="1.4" y="9.6" width="6.4" height="6"/><rect x="10" y="9.6" width="6.4" height="6"/></g>
 <path d="M10.2 6.2 V8 M4.6 9.6 V8 H13.2 V9.6" fill="none" stroke="#555" stroke-width=".9"/>
</svg>
<svg style="left:150px;top:95px" width="19" height="17" viewBox="0 0 19 17">
 <g fill="#fff" stroke="#666" stroke-width=".9"><rect x="6.2" y="1" width="6.4" height="4.6"/><rect x="1.4" y="8" width="6.6" height="3.4" rx="1" fill="#e4e4e4"/><rect x="10.6" y="8" width="6.6" height="3.4" rx="1" fill="#e4e4e4"/></g>
 <path d="M9.4 5.6 V7 M4.6 8 V7 H14 V8" fill="none" stroke="#666" stroke-width=".9"/>
 <path d="M4 11.6 V13.6 H7.4 M6.2 12.2 L7.8 13.6 L6.2 15" fill="none" stroke="#3d5cac" stroke-width="1.1"/>
 <rect x="9.6" y="12.4" width="7.4" height="3" fill="#fff" stroke="#777" stroke-width=".8" stroke-dasharray="1.2 .8"/>
</svg>
<!-- TOOLS row2 -->
<svg style="left:62px;top:121px" width="18" height="17" viewBox="0 0 18 17">
 <g fill="#fff" stroke="#8e8e8e" stroke-width=".9" stroke-dasharray="1.3 .8"><rect x="5.4" y="1.2" width="7" height="4.6"/><rect x="1.2" y="9.6" width="6.2" height="5"/></g>
 <path d="M8.8 5.8 V7.6 M4.2 9.6 V7.6 H12.4 V9" fill="none" stroke="#888" stroke-width=".8"/>
 <rect x="9.4" y="9.2" width="7" height="5.4" fill="#fff" stroke="#555" stroke-width=".9"/>
 <path d="M15 11.4 V16.2 M12.6 13.8 H17.4" stroke="#3f8f5a" stroke-width="1.7"/>
</svg>
<svg style="left:84px;top:121px" width="18" height="17" viewBox="0 0 18 17">
 <rect x="5.2" y="1.2" width="7" height="4.6" fill="#fff" stroke="#8e8e8e" stroke-width=".9" stroke-dasharray="1.3 .8"/>
 <path d="M8.2 5.8 V14.6 M8.2 11.6 H10" fill="none" stroke="#888" stroke-width=".9"/>
 <rect x="9.8" y="9.2" width="7" height="5.4" fill="#fff" stroke="#555" stroke-width=".9"/>
 <path d="M15.2 11.4 V16.2 M12.8 13.8 H17.6" stroke="#3f8f5a" stroke-width="1.7"/>
</svg>
<svg style="left:106px;top:122px" width="18" height="14" viewBox="0 0 18 14">
 <rect x="8.4" y="1.6" width="8.4" height="4.2" rx="2.1" fill="#e9e9e9" stroke="#666" stroke-width="1.1" transform="rotate(-8 12 4)"/>
 <rect x="1" y="7.4" width="9" height="4" rx="2" fill="#f4f4f4" stroke="#777" stroke-width="1.1" transform="rotate(-38 5.5 9.4)"/>
</svg>
<svg style="left:129.5px;top:122.6px" width="15.5" height="14" viewBox="0 0 16 15">
 <rect x=".8" y=".8" width="14.2" height="12.8" fill="#d9d9d9" stroke="#666" stroke-width="1"/>
 <path d="M6.4 3.6 H13.4 M2.6 6.4 H13.4 M2.6 8.8 H13.4 M2.6 11.2 H13.4" stroke="#555" stroke-width="1.1"/><path d="M2.6 4.6 L3.8 2.4 L5 4.6" fill="none" stroke="#444" stroke-width=".8"/>
</svg>
<!-- BOX group -->
<svg style="left:181px;top:96px" width="16" height="15" viewBox="0 0 16 15">
 <rect x=".9" y=".9" width="11.4" height="8.4" rx=".9" fill="#eceef6" stroke="#7470b6" stroke-width="1.2"/>
 <rect x="3.9" y="5.4" width="11.2" height="8" rx=".9" fill="#dadada" stroke="#7470b6" stroke-width="1.2"/>
</svg>
<svg style="left:204px;top:96px" width="16" height="15" viewBox="0 0 16 15">
 <rect x=".9" y=".9" width="11.4" height="8.4" rx=".9" fill="#f3e4e0" stroke="#7d6cb0" stroke-width="1.1"/><rect x="1.4" y="1.4" width="10.4" height="2.9" fill="#e24a16"/>
 <rect x="3.7" y="5.2" width="11.4" height="8.2" rx=".9" fill="#6a8bd2" stroke="#6f66b4" stroke-width="1.2"/>
</svg>
<svg style="left:227px;top:96px" width="16" height="15" viewBox="0 0 16 15">
 <rect x="1.8" y="1.8" width="12.4" height="11.6" rx="2.2" fill="#34447f" opacity=".6"/>
 <rect x="1" y="1" width="12.2" height="11.4" rx="2.2" fill="#6b8cd2"/>
</svg>
<svg style="left:181px;top:118px" width="15" height="17" viewBox="0 0 15 17">
 <path d="M1 15 H13.2 V1.6" fill="none" stroke="#111" stroke-width="1.9"/>
 <path d="M1 12.6 H10.8 V1.6" fill="none" stroke="#3a3a3a" stroke-width="1.5"/>
 <path d="M1 10.6 H8.8 V1.6" fill="none" stroke="#777" stroke-width="1"/>
</svg>
<svg style="left:204px;top:118px" width="15" height="17" viewBox="0 0 15 17">
 <path d="M1.4 15.2 H13.6 V2.2" fill="none" stroke="#7b96d6" stroke-width="1.3"/>
 <path d="M1.4 13.4 H11.8 V2.2" fill="none" stroke="#e39434" stroke-width="1.5"/>
 <path d="M1.4 11.6 H9.8 V2.2" fill="none" stroke="#ecd486" stroke-width="1.5"/>
</svg>
<svg style="left:252px;top:99px" width="29" height="26" viewBox="0 0 29 26">
 <rect x="1.2" y="1.2" width="26.2" height="23" fill="#fff" stroke="#5e5e5e" stroke-width="1.6"/>
 <rect x="4.2" y="4.4" width="20" height="2.4" fill="#5a5a5a"/><rect x="4.2" y="8.8" width="8.6" height="12" fill="#5e5e5e"/>
 <path d="M15 9.6 H24.2 M15 12.2 H24.2 M15 14.8 H24.2" stroke="#6a6a6a" stroke-width="1"/><path d="M15 17.4 H24.2 M15 19.6 H24.2" stroke="#b4b4b4" stroke-width="1.4"/>
</svg>
<div class="big" style="left:252.6px;top:127.8px">Layout</div>
<!-- TEXT group -->
<div class="abs" style="left:295.6px;top:97px;font-size:13.8px;font-weight:bold;color:#151515;letter-spacing:-.4px;line-height:14px;transform:scaleX(.9);transform-origin:0 0;-webkit-text-stroke:.35px #151515">Aa</div>
<div class="abs" style="left:321px;top:97px;font-weight:bold;color:#151515;line-height:14px;white-space:nowrap;transform:scaleX(.85);transform-origin:0 0;-webkit-text-stroke:.3px #151515"><span style="font-size:13.8px;letter-spacing:-3.4px">A</span><span style="font-size:9.6px">A</span></div>
<div class="abs" style="left:345.2px;top:94.3px;font-size:13.5px;font-weight:bold;color:#1a1a1a;line-height:14px;transform:scaleX(.92);transform-origin:0 0">A</div>
<div class="abs" style="left:343px;top:107.4px;width:14.5px;height:3.6px;background:#d63c08"></div>
<div class="abs" style="left:367px;top:107.4px;width:11.5px;height:3.6px;background:#86ecf2"></div>
<svg style="left:366px;top:97px" width="14" height="11" viewBox="0 0 14 11">
 <text x=".6" y="6.4" font-family="Liberation Sans" font-size="6" fill="#555">ab</text>
 <path d="M6.6 8.2 L11.4 2.8" stroke="#3a3a3a" stroke-width="1.8" stroke-linecap="round"/><path d="M4.8 9.8 L6.6 8" stroke="#555" stroke-width="1"/>
</svg>
<div class="abs" style="left:298.8px;top:119.8px;font-size:13.2px;font-weight:bold;color:#151515;line-height:14px;-webkit-text-stroke:.5px #151515">B</div>
<div class="abs" style="left:324.4px;top:119.6px;font-size:14.5px;font-style:italic;font-family:'Liberation Serif',serif;color:#222;line-height:14px">I</div>
<svg style="left:342px;top:120px" width="17" height="16" viewBox="0 0 17 16">
 <rect x="1" y="1.2" width="12.6" height="11.2" fill="#fff" stroke="#666" stroke-width="1"/>
 <path d="M2.8 3.8 H5.4 M6.6 3.8 H11.8 M2.8 6.2 H5.4 M6.6 6.2 H11.8 M2.8 8.6 H5.4 M6.6 8.6 H9" stroke="#666" stroke-width="1"/>
 <path d="M8.4 11 L12.4 6.6 L16 9.8 L12 14.2 Z" fill="#5a5a5a"/>
</svg>
<!-- ALIGNMENT row1 -->
<svg style="left:393px;top:95px" width="18" height="18" viewBox="0 0 18 18"><path d="M1.6 2 H16.4" stroke="#3f3f3f" stroke-width="1"/><path d="M3 4.4 H15 M2.4 6.6 H15.8" stroke="#555" stroke-width="1.2"/></svg>
<svg style="left:415px;top:95.9px" width="18" height="18" viewBox="0 0 18 18"><path d="M1.6 6.4 H16.4" stroke="#4a4a4a" stroke-width="1"/><path d="M3 8.8 H15 M2.4 11 H15.8" stroke="#5a5348" stroke-width="1.2"/></svg>
<svg style="left:437px;top:95.6px" width="18" height="18" viewBox="0 0 18 18"><path d="M3 10.6 H15" stroke="#555" stroke-width="1"/><path d="M2.4 12.8 H15.8 M3 15 H15" stroke="#5a5a5a" stroke-width="1.3"/></svg>
<svg style="left:460px;top:96px" width="18" height="16" viewBox="0 0 18 16">
 <rect x="1.6" y="1.4" width="14" height="2.6" fill="#6d86c8"/><rect x="1.6" y="4.6" width="14" height="1.6" fill="#fff" stroke="#8a7b55" stroke-width=".6"/>
 <rect x="1.6" y="6.8" width="14" height="7.2" fill="#fff" stroke="#777" stroke-width=".8"/><rect x="3" y="8.4" width="11" height="1.8" fill="#6d86c8"/><rect x="3" y="11" width="11" height="1.8" fill="#8aa0d8"/>
 <path d="M14 6.6 L17 7.4 L15 9 Z" fill="#4a66b3"/>
</svg>
<!-- ALIGNMENT row2 -->
<svg style="left:393px;top:121px" width="18" height="17" viewBox="0 0 18 17"><path d="M1.4 4.4 H16 M1.4 6.8 H13.6 M1.4 9.2 H16 M1.4 11.6 H13" stroke="#555" stroke-width="1.5"/></svg>
<svg style="left:415px;top:121px" width="18" height="17" viewBox="0 0 18 17"><path d="M1.8 4.4 H16.2 M3 6.8 H15 M1.8 9.2 H16.2 M3.4 11.6 H14.6" stroke="#555" stroke-width="1.5"/></svg>
<svg style="left:437px;top:121px" width="18" height="17" viewBox="0 0 18 17"><path d="M2 4.4 H16.6 M4.4 6.8 H16.6 M2 9.2 H16.6 M5 11.6 H16.6" stroke="#555" stroke-width="1.5"/></svg>
<svg style="left:459px;top:121px" width="18" height="17" viewBox="0 0 18 17"><path d="M1.8 4.4 H16.4 M1.8 6.8 H16.4 M1.8 9.2 H16.4 M1.8 11.6 H16.4" stroke="#555" stroke-width="1.5"/></svg>
<!-- LINE group -->
<svg style="left:490px;top:98px" width="17" height="12" viewBox="0 0 17 12"><path d="M1 2.8 H15.8 M1 5.9 H15.8 M1 9 H15.8" stroke="#7a7a7a" stroke-width="1.7"/></svg>
<svg style="left:513px;top:98px" width="17" height="12" viewBox="0 0 17 12"><path d="M1 2.6 H16" stroke="#555" stroke-width="1"/><path d="M1 5.6 H16" stroke="#2a2a2a" stroke-width="1.6"/><path d="M1 9.2 H16" stroke="#111" stroke-width="2.4"/></svg>
<!-- CHART row1 -->
<svg style="left:542px;top:95px" width="17" height="17" viewBox="0 0 17 17">
 <rect x="1" y="1" width="7.4" height="3" fill="#fff" stroke="#666" stroke-width=".9"/>
 <path d="M3.4 4 V14.4 H6 M3.4 6.8 H6 M3.4 10.6 H6" fill="none" stroke="#666" stroke-width=".9"/>
 <rect x="6" y="5.2" width="9.6" height="3" fill="#3d62b4" stroke="#555" stroke-width=".6"/><rect x="6" y="9" width="9.6" height="3" fill="#3d62b4" stroke="#555" stroke-width=".6"/><rect x="6" y="12.8" width="9.6" height="3" fill="#3d62b4" stroke="#555" stroke-width=".6"/>
 <rect x="6" y="5.2" width="3.4" height="3" fill="#e8e8e8" stroke="#555" stroke-width=".6"/><rect x="6" y="9" width="3.4" height="3" fill="#e8e8e8" stroke="#555" stroke-width=".6"/><rect x="6" y="12.8" width="3.4" height="3" fill="#e8e8e8" stroke="#555" stroke-width=".6"/>
</svg>
<svg style="left:565px;top:95px" width="18" height="17" viewBox="0 0 18 17">
 <g fill="#fff" stroke="#555" stroke-width="1"><rect x="5.4" y="1.2" width="7" height="5"/><rect x="1" y="10.6" width="4.8" height="4.8"/><rect x="12" y="10.6" width="4.8" height="4.8"/></g>
 <path d="M8.9 6.2 V8.4 M3.4 10.6 V8.4 H14.4 V10.6" fill="none" stroke="#555" stroke-width="1"/>
 <path d="M6.4 13 H11.4 M7.8 11.6 L6.4 13 L7.8 14.4 M10 11.6 L11.4 13 L10 14.4" fill="none" stroke="#3d5cac" stroke-width="1.1"/>
</svg>
<svg style="left:588px;top:95px" width="18" height="17" viewBox="0 0 18 17">
 <rect x="4.4" y="1.6" width="6.4" height="4.6" fill="#fff" stroke="#555" stroke-width=".9"/>
 <path d="M7.6 6.2 V8 M3.4 9.6 V8 H13 V9.6" fill="none" stroke="#555" stroke-width=".9"/>
 <rect x="1" y="9.6" width="4.4" height="6" fill="#3d62b4"/><rect x="6.2" y="9.6" width="4.4" height="6" fill="#3d62b4"/><rect x="11.6" y="9.6" width="4.4" height="6" fill="#3d62b4"/>
 <path d="M12.6 .6 L9.4 7 L12.2 6.6 L10.6 11.8 L15.8 4.6 L12.8 5 L15.2 .6 Z" fill="#d8b45a" stroke="#f3efe2" stroke-width=".4"/>
</svg>
<!-- CHART row2 -->
<svg style="left:542px;top:118px" width="18" height="17" viewBox="0 0 18 17">
 <g fill="#fff" stroke="#6e6e6e" stroke-width=".8"><rect x="6.8" y="2.4" width="4.4" height="3.6"/><rect x="3" y="9.8" width="4.2" height="3.8"/><rect x="10.8" y="9.8" width="4.2" height="3.8"/></g>
 <path d="M9 6 V7.8 M5.1 9.8 V7.8 H12.9 V9.8" fill="none" stroke="#6e6e6e" stroke-width=".8"/>
 <path d="M.6 5.2 H3.8 M2.2 3.6 V6.8 M14.2 5.2 H17 M15.8 3.8 L17.2 5.2 L15.8 6.6" fill="none" stroke="#3d5cac" stroke-width="1.1"/>
</svg>
<svg style="left:565px;top:117px" width="18" height="19" viewBox="0 0 18 19">
 <g fill="#fff" stroke="#6e6e6e" stroke-width=".8"><rect x="6.8" y="5.4" width="4.4" height="3.6"/><rect x="3" y="11.6" width="4.2" height="3.8"/><rect x="10.8" y="11.6" width="4.2" height="3.8"/></g>
 <path d="M9 9 V10.4 M5.1 11.6 V10.4 H12.9 V11.6" fill="none" stroke="#6e6e6e" stroke-width=".8"/>
 <path d="M9 .8 L10.8 2.8 H7.2 Z M9 18.2 L10.8 16.2 H7.2 Z" fill="#3d6cc0"/><path d="M9 2.8 V4.6 M9 15 V16.4" stroke="#3d6cc0" stroke-width=".9" stroke-dasharray="1 .6"/>
</svg>
<svg style="left:588px;top:117px" width="18" height="19" viewBox="0 0 18 19">
 <g fill="#fff" stroke="#6e6e6e" stroke-width=".8"><rect x="6.8" y="5.8" width="4.4" height="3.6"/><rect x="3" y="12" width="4.2" height="3.8"/><rect x="10.8" y="12" width="4.2" height="3.8"/></g>
 <path d="M9 9.4 V10.8 M5.1 12 V10.8 H12.9 V12" fill="none" stroke="#6e6e6e" stroke-width=".8"/>
 <path d="M9 1.2 L10.8 3.2 H7.2 Z" fill="#3d6cc0"/><path d="M9 3.2 V5" stroke="#3d6cc0" stroke-width=".9" stroke-dasharray="1 .6"/>
</svg>
<!-- EDITING row1 -->
<svg style="left:618px;top:96px" width="16" height="15" viewBox="0 0 16 15">
 <path d="M3.6 1.6 H6.2 V4 L7 5 V13.6 H1 V8.4 Z" fill="#4f4f4f"/><path d="M12.4 1.6 H9.8 V4 L9 5 V13.6 H15 V8.4 Z" fill="#4f4f4f"/><rect x="6.6" y="5.4" width="2.8" height="3.6" fill="#4f4f4f"/>
 <path d="M2.6 8 V13 M13.4 8 V13" stroke="#a8a8a8" stroke-width="1.1"/><path d="M4.9 2.2 V5 M11.1 2.2 V5" stroke="#8a8a8a" stroke-width=".8"/>
</svg>
<svg style="left:640px;top:94.8px" width="18" height="18" viewBox="0 0 18 18">
 <text x="1" y="8.4" font-family="Liberation Sans" font-size="9.4" fill="#4a4a4a">a</text><text x="6.2" y="8.4" font-family="Liberation Sans" font-size="9.4" fill="#b9b9b9">b</text>
 <text x="6.8" y="16.2" font-family="Liberation Sans" font-size="9.4" fill="#444">a</text><text x="11.8" y="16.2" font-family="Liberation Sans" font-size="9.4" fill="#2c3f8c" stroke="#2c3f8c" stroke-width=".15">c</text>
 <path d="M2.2 10.6 V13.4 H6 M4.6 12 L6.2 13.4 L4.6 14.8" fill="none" stroke="#3d5cac" stroke-width="1.1"/>
</svg>
<svg style="left:663px;top:96px" width="17" height="16" viewBox="0 0 17 16">
 <path d="M1.6 1.2 Q8 6 15.4 14.2" fill="none" stroke="#c4562a" stroke-width="2.2" stroke-linecap="round"/><path d="M14.6 1.4 Q8 6.6 1.4 14" fill="none" stroke="#c4562a" stroke-width="2" stroke-linecap="round"/>
</svg>
<!-- EDITING row2 -->
<svg style="left:620px;top:118px" width="13" height="17" viewBox="0 0 13 17"><path d="M1.4 1.4 L1.4 12.8 L4.4 10.2 L6.8 15.4 L9 14.4 L6.6 9.4 L10.8 9.2 Z" fill="#fff" stroke="#7a7a7a" stroke-width="1"/></svg>
<svg style="left:640px;top:118px" width="18" height="17" viewBox="0 0 18 17">
 <rect x="8.6" y="1.6" width="6" height="6" fill="#d3b352"/><rect x="2" y="8.8" width="6" height="6" fill="#d3b352"/>
 <rect x="1.2" y="1.2" width="6.6" height="6.6" fill="#fff" stroke="#666" stroke-width="1"/><rect x="9" y="8.4" width="6.6" height="6.6" fill="#fff" stroke="#666" stroke-width="1"/>
</svg>
<svg style="left:664px;top:119px" width="16" height="15" viewBox="0 0 16 15">
 <rect x="1" y="9.6" width="6.4" height="3.6" fill="#fff" stroke="#555" stroke-width="1"/>
 <path d="M10.2 .4 L15 4.6 L13.2 5.8 L10.2 9 L9.2 10.8 L7.8 9.4 L5 12 L4 11 L6.6 8.2 L5.2 6.8 L7 5.8 L10 2.4 Z" fill="#1d1d1d"/>
</svg>
<!-- PAGE -->
<svg style="left:695px;top:96px" width="28" height="30" viewBox="0 0 28 30">
 <path d="M5.6 2.4 H19.4 L25.4 8.4 V27.2 H5.6 Z" fill="#fff" stroke="#666" stroke-width="1"/><path d="M19.4 2.4 V8.4 H25.4" fill="#f0f0f0" stroke="#666" stroke-width=".9"/>
 <rect x="8" y="5" width="14.6" height="19.6" fill="none" stroke="#aaa" stroke-width=".8" stroke-dasharray="1.2 1.2"/>
 <path d="M2.2 2.4 V27.6 M.8 4.4 L2.2 2 L3.6 4.4 M6 29 H25.4 M23.4 27.6 L25.8 29 L23.4 30.4" fill="none" stroke="#666" stroke-width=".9"/>
</svg>
<div class="big" style="left:698px;top:127.8px">Setup</div>
<!-- CHART -->
<div id="canvas" class="abs" style="left:5px;top:156px;width:773px;height:441px;background:#fff"></div>
<div class="ln" style="left:392px;top:290px;width:1px;height:246px"></div>
<div class="ln" style="left:392px;top:311px;width:8px;height:1px"></div>
<div class="ln" style="left:192px;top:334px;width:401px;height:1px"></div>
<div class="ln" style="left:192px;top:334px;width:1px;height:202px"></div>
<div class="ln" style="left:592px;top:334px;width:1px;height:145px"></div>
<div class="ln" style="left:183px;top:365px;width:17px;height:1px"></div>
<div class="ln" style="left:183px;top:422px;width:17px;height:1px"></div>
<div class="ln" style="left:183px;top:478px;width:17px;height:1px"></div>
<div class="ln" style="left:183px;top:535px;width:17px;height:1px"></div>
<div class="ln" style="left:383px;top:365px;width:17px;height:1px"></div>
<div class="ln" style="left:583px;top:365px;width:17px;height:1px"></div>
<div class="ln" style="left:383px;top:422px;width:17px;height:1px"></div>
<div class="ln" style="left:583px;top:422px;width:17px;height:1px"></div>
<div class="ln" style="left:383px;top:478px;width:17px;height:1px"></div>
<div class="ln" style="left:583px;top:478px;width:17px;height:1px"></div>
<div class="ln" style="left:383px;top:535px;width:9px;height:1px"></div>
<div class="abs" style="left:348px;top:194px;width:88px;height:96px;border:1px solid #4a4a4a;background:#fff"></div>
<div class="abs" style="left:351px;top:197px;width:82px;height:90px;border:1px solid #555;background:#e2f0fd"></div>
<div class="abs" style="left:430.5px;top:284.5px;width:5.5px;height:5.5px;border:1px solid #6a8fc0;background:#dfeaf8"></div>
<svg style="left:387.5px;top:186px" width="9" height="6" viewBox="0 0 9 6"><path d="M4.5 .3 L8.3 5.6 H.7 Z" fill="#111"/></svg>
<svg style="left:135px;top:561px" width="9" height="6" viewBox="0 0 9 6"><path d="M4.5 5.6 L8.3 .3 H.7 Z" fill="#111"/></svg>
<svg style="left:239.5px;top:561px" width="9" height="6" viewBox="0 0 9 6"><path d="M4.5 5.6 L8.3 .3 H.7 Z" fill="#111"/></svg>
<div class="ct b" style="left:351px;top:255px;width:82px">Susan Cabrera</div>
<div class="ct" style="left:351px;top:265.2px;width:82px">Operations Mgr.</div>
<div class="ct" style="left:355.5px;top:275.2px;width:82px;text-align:left">Headcount:</div>
<div class="ct" style="left:351px;top:275.2px;width:78px;text-align:right">25</div>
<svg style="left:372px;top:202px" width="40.5" height="51"><use href="#ph" width="40.5" height="51"/></svg>
<div class="box" style="left:400px;top:299px;height:27px;padding-top:2.5px"><b>Hana Biru</b>Assistant</div>
<div class="box" style="left:96px;top:342px"><b>Alok Gupta</b>Warehouse<br>Fulfillment Lead</div>
<div class="box hl" style="left:200px;top:342px"><b>James Anderson</b>Warehouse<br>Fulfillment Associate</div>
<div class="box" style="left:296px;top:342px"><b>Jennifer Bangoura</b>Warehouse<br>Fulfillment Associate</div>
<div class="box hl" style="left:400px;top:342px"><b>Milan Brahmbhatt</b>Warehouse<br>Fulfillment Associate</div>
<div class="box" style="left:496px;top:342px"><b>Megan Burton</b>Warehouse<br>Fulfillment Associate</div>
<div class="box" style="left:600px;top:342px"><b>Cynthia Cummis</b>Warehouse<br>Fulfillment Associate</div>
<div class="box" style="left:96px;top:399px"><b>Yamide Dagnet</b>Warehouse<br>Fulfillment Associate</div>
<div class="box" style="left:200px;top:399px"><b>Leonora Dalipi</b>Warehouse<br>Fulfillment Associate</div>
<div class="box" style="left:296px;top:399px"><b>Daryl Ditz</b>Warehouse<br>Fulfillment Associate</div>
<div class="box" style="left:400px;top:399px"><b>Vivian Fong</b>Warehouse RMA Test<br>Lead</div>
<div class="box hl" style="left:496px;top:399px"><b>Jianwen Bai</b>Warehouse<br>Fulfillment Associate</div>
<div class="box" style="left:600px;top:399px"><b>Peter Hazlewood</b>Warehouse<br>Fulfillment Associate</div>
<div class="box" style="left:96px;top:455px"><b>Umang Jain</b>Retail Shipping Lead</div>
<div class="box" style="left:200px;top:455px"><b>Kevin Kennedy</b>Warehouse RMA Test<br>Lead</div>
<div class="box" style="left:296px;top:455px;padding-top:4px"><b>Ma. Lucilla Celina<br>La Vina</b>Shipping Supervisor</div>
<div class="box" style="left:400px;top:455px;padding-top:4px"><b>Laura Malaguzzi<br>Valeri</b>Warehouse Shipping<br>Lead</div>
<div class="box" style="left:496px;top:455px"><b>Neha Mungekar</b>Warehouse RMA Test<br>Associate</div>
<div class="box" style="left:600px;top:455px"><b>Michael Obeiter</b>Warehouse RMA Test<br>Associate</div>
<div class="box" style="left:96px;top:512px"><b>Nitin Pandit</b>Warehouse Receiving<br>Clerk</div>
<div class="box" style="left:200px;top:512px"><b>Kathleen Reytar</b>Warehouse RMA Test<br>Lead</div>
<div class="box vac" style="left:296px;top:512px"><b>Vacant</b>Warehouse Receiving<br>Lead</div><!-- PANEL -->
<div id="panel"></div><div id="ptool"></div>
<svg style="left:784px;top:162.6px" width="15" height="15" viewBox="0 0 15 15"><path d="M7.4 1 V13.6 M1 7.3 H13.8" stroke="#52a341" stroke-width="4.1"/></svg>
<svg style="left:806px;top:162.4px" width="16" height="15" viewBox="0 0 16 15"><path d="M1.4 1.2 Q8 6 14.6 13.6" fill="none" stroke="#c25a2e" stroke-width="2.4" stroke-linecap="round"/><path d="M14 1.4 Q8 6.4 1.4 13.2" fill="none" stroke="#c25a2e" stroke-width="2.1" stroke-linecap="round"/></svg>
<svg style="left:831px;top:163px" width="12" height="14" viewBox="0 0 12 14"><path d="M6 .8 L10.8 6.4 H7.4 V13 H4.6 V6.4 H1.2 Z" fill="#5a5a5a"/></svg>
<svg style="left:853px;top:163px" width="12" height="14" viewBox="0 0 12 14"><path d="M6 13.2 L10.8 7.6 H7.4 V1 H4.6 V7.6 H1.2 Z" fill="#4769b8"/></svg>
<div class="abs" style="left:877.5px;top:160.5px;font-size:12.5px;font-weight:bold;color:#1a1a1a;line-height:13px">A</div>
<div class="abs" style="left:875px;top:173.2px;width:14.5px;height:3.2px;background:#d63c08"></div>
<div class="abs" style="left:900px;top:173.2px;width:11px;height:3.2px;background:#86ecf2"></div>
<svg style="left:899px;top:164px" width="14" height="10" viewBox="0 0 14 10"><text x=".4" y="6" font-family="Liberation Sans" font-size="5.6" fill="#555">ab</text><path d="M6 8 L11.6 1.6" stroke="#3a3a3a" stroke-width="1.7" stroke-linecap="round"/><path d="M4.6 9 L6.2 7.6" stroke="#555" stroke-width=".9"/></svg>
<div class="selb" style="left:918.3px;top:159.3px;width:20.6px;height:20.5px"></div>
<div class="abs" style="left:923.6px;top:162.5px;font-size:13px;font-weight:bold;color:#151515;line-height:14px;-webkit-text-stroke:.4px #151515">B</div>
<div class="abs" style="left:948.6px;top:161.6px;font-size:14.6px;font-style:italic;font-family:'Liberation Serif',serif;color:#222;line-height:14px">I</div>
<svg style="left:982px;top:166px" width="8" height="8" viewBox="0 0 8 8"><path d="M1 1 L7 7 M7 1 L1 7" stroke="#1a1a1a" stroke-width="1.7"/></svg>
<div class="prow" style="top:183px;height:72px"><div class="k" style="color:#7c8da6;padding-top:3px">Photo</div></div>
<svg style="left:890px;top:185px" width="54" height="68"><use href="#ph" width="54" height="68"/></svg>
<div class="prow" style="top:255px;height:13px"><div class="k">Name</div><div class="v">Susan Cabrera</div></div>
<div class="prow" style="top:268px;height:13px"><div class="k">Title</div><div class="v">Operations Mgr.</div></div>
<div class="prow" style="top:281px;height:13px"><div class="k">Department Name</div><div class="v">Logistics</div></div>
<div class="prow" style="top:294px;height:13px"><div class="k">Dept #</div><div class="v">102</div></div>
<div class="prow" style="top:307px;height:20px"><div class="k">Employee Status<br>Classification</div><div class="v">Regular</div></div>
<div class="prow" style="top:327px;height:13px"><div class="k">FT/PT</div><div class="v">Full-time</div></div>
<div class="prow" style="top:340px;height:13px"><div class="k">Location</div><div class="v">Scotts Valley</div></div>
<div class="prow" style="top:353px;height:13px"><div class="k">PersonID</div><div class="v">1005</div></div>
<div class="prow" style="top:366px;height:12.5px"><div class="k">SupervisorID</div><div class="v">1166</div></div>
<div class="abs" style="left:780px;top:563px;width:215px;height:1px;background:#a9c1dd"></div>
<div class="selb" style="left:835px;top:565.5px;width:50.5px;height:14px;border-radius:3px"></div>
<div class="pt" style="left:767.5px;top:567.3px;width:80px;color:#4a4a4a">Help</div>
<div class="pt" style="left:820.5px;top:567.3px;width:80px;color:#2f7391">Profile</div>
<div class="pt" style="left:873.5px;top:567.3px;width:80px;color:#4a4a4a">Subcharts</div>
<div class="pt" style="left:926.5px;top:567.3px;width:80px;color:#4a4a4a">Search</div>
<div class="pt" style="left:767.5px;top:583.3px;width:80px;color:#4a4a4a">Views</div>
<div class="pt" style="left:820.5px;top:583.3px;width:80px;color:#4a4a4a">Parking</div>
<div class="pt" style="left:873.5px;top:583.3px;width:80px;color:#4a4a4a">Templates</div>
<div class="pt" style="left:926.5px;top:583.3px;width:80px;color:#4a4a4a">Box Styles</div><!-- STATUS -->
<svg style="left:11px;top:603.2px" width="16.5" height="15.5" viewBox="0 0 17 16">
 <g fill="#e6e6e6" stroke="#666" stroke-width="1"><rect x="5" y="1" width="7" height="4.6"/><rect x="1" y="9.4" width="6" height="5.4"/><rect x="9.6" y="9.4" width="6.4" height="5.4" fill="#cfcfcf"/></g>
 <path d="M8.5 5.6 V7.6 M4 9.4 V7.6 H12.8 V9.4" fill="none" stroke="#555" stroke-width="1"/><path d="M12.8 10.6 V13.8 M11.2 12.2 H14.4" stroke="#222" stroke-width="1.2"/>
</svg>
<div class="abs" style="left:154px;top:603px;width:1px;height:13px;background:#b4c3d9;box-shadow:1px 0 0 #f9fbfe"></div>
<div class="abs" style="left:163px;top:604.6px;font-size:8.8px;line-height:10px;color:#7c8da6;letter-spacing:.22px;white-space:nowrap">header image (238 boxes)</div>
<div class="abs" style="left:870px;top:609px;width:7.5px;height:1.6px;background:#222"></div>
<div class="abs" style="left:883px;top:609.3px;width:57px;height:1px;background:#333"></div>
<div class="abs" style="left:893.4px;top:606.6px;width:1.8px;height:6.4px;background:#222"></div>
<div class="abs" style="left:946px;top:609px;width:8.4px;height:1.6px;background:#222"></div><div class="abs" style="left:949.4px;top:605.6px;width:1.6px;height:8.4px;background:#222"></div>
<div class="abs" style="left:968px;top:604.6px;font-size:8.8px;line-height:10px;color:#8a9ab3;letter-spacing:.2px;white-space:nowrap">100%</div>
<div class="abs" style="left:6px;top:622px;width:988px;height:1px;background:#ccd7e7"></div><div class="abs" style="left:6px;top:623px;width:988px;height:1px;background:#f3f5f9"></div><div class="abs" style="left:6px;top:620px;width:988px;height:1px;background:#eef2f9"></div>
</body></html>
